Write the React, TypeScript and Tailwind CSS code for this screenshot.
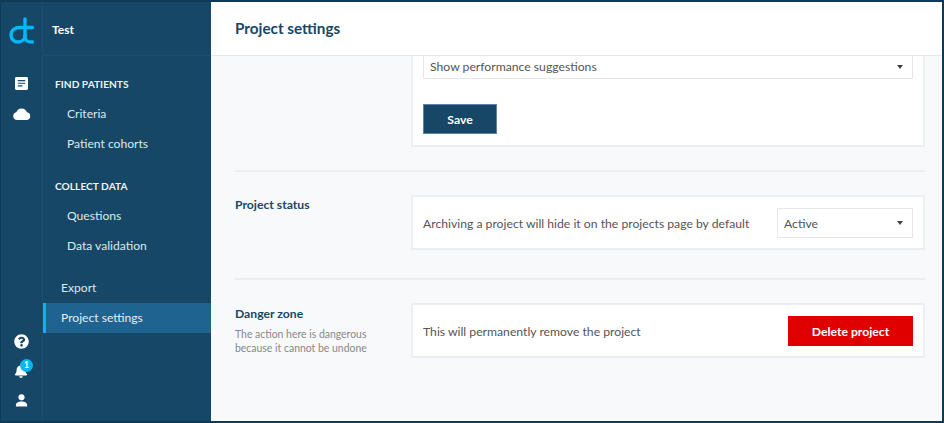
import { FaBell, FaQuestionCircle } from 'react-icons/fa';

const font = { fontFamily: 'Lato, "Noto Sans", sans-serif' };

function NavGroup({ title, items }: { title: string; items: string[] }) {
  return (
    <div className="mb-[12px]">
      <div className="flex h-[30px] items-center pt-[2px] pl-[12px] text-[10.2px] font-bold text-white/95">{title}</div>
      {items.map((item) => (
        <div key={item} className="flex h-[30px] items-center pt-[1px] pl-[24px] text-[12.1px] text-[#dfe8ee]">
          {item}
        </div>
      ))}
    </div>
  );
}

function Caret() {
  return <span className="h-0 w-0 border-x-[3.5px] border-t-[4px] border-x-transparent border-t-[#444]" />;
}

function Logo() {
  return (
    <svg width="26" height="28" viewBox="0 0 26 28" fill="none" stroke="#06b6f7" strokeWidth="3.4" strokeLinecap="round">
      <path d="M16 2v18c0 3.500 2 5 7.500 5" />
      <path d="M23.500 10.500H11C5.500 10.500 2 13.500 2 18s3.500 7 7 7c4.500 0 7-3 7-6.500" />
    </svg>
  );
}

export default function App() {
  return (
    <div style={font} className="flex h-[423px] w-[944px] overflow-hidden border border-t-2 border-r-2 border-b-2 border-[#0e3a57] bg-[#f8f9fb]">
      <aside className="flex w-[210px] shrink-0 bg-[#174766]">
        <div className="flex w-[42px] shrink-0 flex-col items-center border-r border-[#1c4d6c]">
          <div className="flex h-[54px] items-center justify-center pt-[3px]">
            <Logo />
          </div>
          <div className="mt-[21px] flex flex-col items-center gap-[18px]">
            <svg width="13" height="13" viewBox="0 0 14 14" className="block">
              <path
                fillRule="evenodd"
                fill="#fff"
                d="M1.500 0h11A1.500 1.500 0 0 1 14 1.500v11a1.500 1.500 0 0 1-1.500 1.500h-11A1.500 1.500 0 0 1 0 12.500v-11A1.500 1.500 0 0 1 1.500 0ZM3 3.200v1.300h8V3.200Zm0 2.900v1.300h8V6.100ZM3 9v1.300h5V9Z"
              />
            </svg>
            <svg width="18" height="12" viewBox="0 0 18 12" className="block">
              <path fill="#fff" d="M4 12a3.900 3.900 0 0 1-.7-7.700A5.600 5.600 0 0 1 13.900 4.300 3.900 3.900 0 0 1 14 12Z" />
            </svg>
          </div>
          <div className="mt-auto mb-[14px] flex flex-col items-center">
            <FaQuestionCircle size={15} color="#fff" className="block" />
            <div className="relative mt-[15px] -ml-[1px]">
              <FaBell size={14} color="#fff" className="block" />
              <span className="absolute -top-[5px] left-[6px] flex h-[13px] w-[13px] items-center justify-center rounded-full bg-[#08b5f2] text-[8.5px] font-bold text-white">
                1
              </span>
            </div>
            <svg width="13" height="13" viewBox="0 0 14 14" className="mt-[16px] block">
              <circle cx="7" cy="3.600" r="3.300" fill="#fff" />
              <path fill="#fff" d="M1 13.500v-1.800C1 9.500 3.500 8 7 8s6 1.500 6 3.700v1.800Z" />
            </svg>
          </div>
        </div>
        <div className="flex min-w-0 flex-1 flex-col">
          <div className="flex h-[54px] items-center border-b border-[#1c4d6c] pt-[2px] pl-[9px] text-[12px] font-bold text-white">
            Test
          </div>
          <nav className="pt-[13px]">
            <NavGroup title="FIND PATIENTS" items={['Criteria', 'Patient cohorts']} />
            <NavGroup title="COLLECT DATA" items={['Questions', 'Data validation']} />
            <div className="flex h-[30px] items-center pt-[1px] pl-[18px] text-[12.1px] text-[#dfe8ee]">Export</div>
            <div className="flex h-[30px] items-center border-l-[3px] border-[#08b5f2] bg-[#1f6390] pt-[1px] pl-[15px] text-[12.1px] text-[#e6eef3]">
              Project settings
            </div>
          </nav>
        </div>
      </aside>

      <main className="flex min-w-0 flex-1 flex-col text-[12.2px] text-[#555]">
        <header className="flex h-[54px] shrink-0 items-center border-b border-[#e6e8ec] bg-white pl-[24px] text-[15.25px] font-bold text-[#174766]">
          Project settings
        </header>
        <div className="flex flex-col pr-[17px] pl-[24px]">
          <div className="ml-[176px] border-x-2 border-b-2 border-[#eceef2] bg-white px-[10px] pb-[11px]">
            <div className="flex h-[23px] items-center justify-between border-x border-b border-[#e6e8ec] pr-[9px] pl-[6px]">
              <span>Show performance suggestions</span>
              <Caret />
            </div>
            <button className="mt-[25px] flex h-[30px] w-[74px] items-center justify-center border border-[#5d83a0] bg-[#174766] pt-[3px] font-bold text-white">
              Save
            </button>
          </div>

          <div className="mt-[23px] flex border-t-2 border-[#eceef2] pt-[23px]">
            <div className="w-[176px] shrink-0 pt-[1px] font-bold text-[#174766]">Project status</div>
            <div className="flex h-[55px] flex-1 items-center justify-between border-2 border-[#eceef2] bg-white px-[10px]">
              <span className="pt-[4px]">Archiving a project will hide it on the projects page by default</span>
              <div className="flex h-[30px] w-[136px] items-center justify-between border border-[#e6e8ec] pr-[9px] pl-[6px]">
                <span className="pt-[3px]">Active</span>
                <Caret />
              </div>
            </div>
          </div>

          <div className="mt-[28px] flex border-t-2 border-[#eceef2] pt-[23px]">
            <div className="w-[176px] shrink-0 pt-[2px]">
              <div className="font-bold text-[#174766]">Danger zone</div>
              <p className="mt-[4px] text-[10.45px] leading-[14px] text-[#888]">
                The action here is dangerous
                <br />
                because it cannot be undone
              </p>
            </div>
            <div className="flex h-[55px] flex-1 items-center justify-between border-2 border-[#eceef2] bg-white px-[10px]">
              <span className="pt-[4px]">This will permanently remove the project</span>
              <button className="flex h-[30px] w-[125px] items-center justify-center bg-[#e10000] pt-[3px] font-bold text-white">
                Delete project
              </button>
            </div>
          </div>
        </div>
      </main>
    </div>
  );
}
